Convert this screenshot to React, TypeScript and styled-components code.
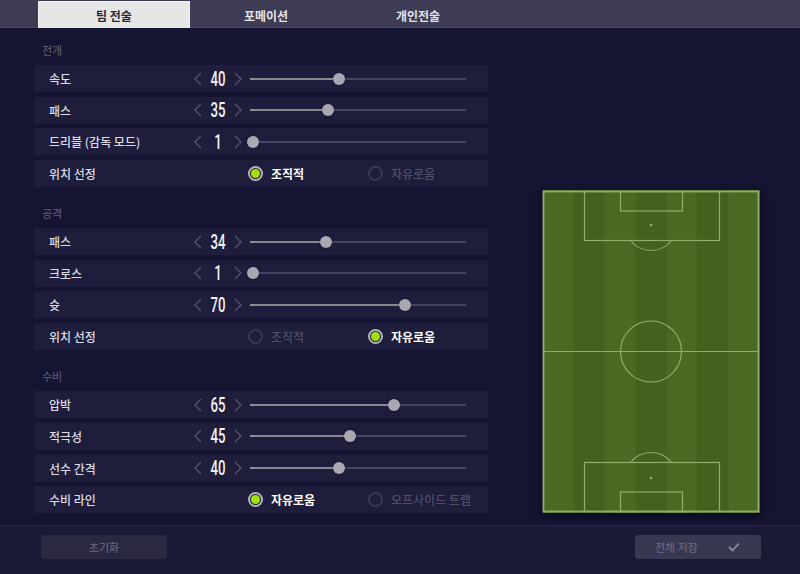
import React from "react";
import styled, { createGlobalStyle } from "styled-components";

const GlobalStyle = createGlobalStyle`
  html, body { margin: 0; padding: 0; background: #151433; }
  body { font-family: "Noto Sans CJK KR", "Noto Sans", sans-serif; }
  * { box-sizing: border-box; }
`;

const Screen = styled.div`
  width: 800px;
  height: 574px;
  display: flex;
  flex-direction: column;
  background: #151433;
  overflow: hidden;
`;

const TabBar = styled.div`
  height: 28px;
  flex: none;
  display: flex;
  padding-left: 38px;
  background: #3e3c55;
  border-bottom: 1px solid #4a4862;
`;

const Tab = styled.div<{ $active?: boolean }>`
  width: 152px;
  height: 27px;
  margin-top: 1px;
  display: flex;
  align-items: center;
  justify-content: center;
  font-size: 12px;
  font-weight: 700;
  color: ${(p) => (p.$active ? "#2a2a2e" : "#e2e2e8")};
  background: ${(p) => (p.$active ? "#e6e6e6" : "transparent")};
  border: ${(p) => (p.$active ? "1px solid #f4f4f4" : "1px solid transparent")};
  border-bottom: none;
`;

const Main = styled.div`
  flex: 1;
  display: flex;
  min-height: 0;
`;

const LeftColumn = styled.div`
  width: 488px;
  padding: 14px 0 0 34px;
  display: flex;
  flex-direction: column;
  gap: 18px;
`;

const Section = styled.div`
  display: flex;
  flex-direction: column;
`;

const SectionTitle = styled.div`
  height: 16px;
  line-height: 16px;
  margin: 0 0 7px 8px;
  font-size: 11px;
  color: #64637c;
`;

const Rows = styled.div`
  display: flex;
  flex-direction: column;
  gap: 4.7px;
`;

const Row = styled.div`
  height: 27px;
  display: flex;
  align-items: center;
  padding-left: 15px;
  background: #1e1d3b;
`;

const Label = styled.div`
  width: 144px;
  font-size: 12px;
  font-weight: 500;
  color: #dcdce4;
  white-space: nowrap;
`;

const Stepper = styled.div`
  width: 57px;
  height: 27px;
  display: flex;
  align-items: center;
`;

const Chevron = styled.svg`
  width: 10px;
  height: 14px;
  flex: none;
`;

const Value = styled.div`
  width: 30px;
  text-align: center;
  font-family: Roboto, "Liberation Sans", sans-serif;
  font-size: 20px;
  font-weight: 500;
  color: #f2f2f6;
  transform: scaleX(0.66);
  line-height: 27px;
  margin-top: 1px;
`;

const SliderBox = styled.div`
  position: relative;
  width: 216px;
  height: 14px;
`;

const Track = styled.div`
  position: absolute;
  left: 0;
  right: 0;
  top: 6px;
  height: 2px;
  background: #46455f;
`;

const Fill = styled.div`
  position: absolute;
  left: 0;
  top: 6px;
  height: 2px;
  background: #8a898f;
`;

const Thumb = styled.div`
  position: absolute;
  top: 1px;
  width: 12px;
  height: 12px;
  margin-left: -6px;
  border-radius: 50%;
  background: #a9a8b2;
  box-shadow: 0 0 2px rgba(0, 0, 0, 0.5);
`;

const Options = styled.div`
  display: flex;
  align-items: center;
  margin-left: 58px;
`;

const Option = styled.div<{ $active?: boolean }>`
  width: 120px;
  display: flex;
  align-items: center;
  gap: 8px;
  font-size: 12px;
  font-weight: ${(p) => (p.$active ? 700 : 500)};
  color: ${(p) => (p.$active ? "#ffffff" : "#4f4e66")};
  white-space: nowrap;
`;

const Radio = styled.div<{ $active?: boolean }>`
  width: 15px;
  height: 15px;
  flex: none;
  border-radius: 50%;
  border: 2px solid ${(p) => (p.$active ? "#b4b4b8" : "#3a3954")};
  display: flex;
  align-items: center;
  justify-content: center;
  &::after {
    content: "";
    display: ${(p) => (p.$active ? "block" : "none")};
    width: 9px;
    height: 9px;
    border-radius: 50%;
    background: #9fe30a;
  }
`;

const RightColumn = styled.div`
  flex: 1;
  display: flex;
  align-items: flex-end;
  padding: 0 0 12px 54px;
`;

const PitchFrame = styled.div`
  width: 218px;
  height: 323px;
  box-shadow: 0 3px 8px rgba(0, 0, 0, 0.55);
`;

const Footer = styled.div`
  height: 49px;
  flex: none;
  display: flex;
  align-items: flex-start;
  justify-content: space-between;
  padding: 9px 39px 0 41px;
  background: #1b1a36;
  border-top: 1px solid #28274a;
`;

const FooterButton = styled.div<{ $primary?: boolean }>`
  width: 126px;
  height: 24px;
  border-radius: 3px;
  display: flex;
  align-items: center;
  justify-content: ${(p) => (p.$primary ? "flex-start" : "center")};
  padding-left: ${(p) => (p.$primary ? "20px" : "0")};
  gap: 30px;
  font-size: 11px;
  color: #6e6d84;
  background: ${(p) => (p.$primary ? "#393853" : "#2a2941")};
`;

type SliderItem = { kind: "slider"; label: string; value: number };
type RadioItem = { kind: "radio"; label: string; options: string[]; selected: number };
type Item = SliderItem | RadioItem;

const sections: { title: string; items: Item[] }[] = [
  {
    title: "전개",
    items: [
      { kind: "slider", label: "속도", value: 40 },
      { kind: "slider", label: "패스", value: 35 },
      { kind: "slider", label: "드리블 (감독 모드)", value: 1 },
      { kind: "radio", label: "위치 선정", options: ["조직적", "자유로움"], selected: 0 },
    ],
  },
  {
    title: "공격",
    items: [
      { kind: "slider", label: "패스", value: 34 },
      { kind: "slider", label: "크로스", value: 1 },
      { kind: "slider", label: "슛", value: 70 },
      { kind: "radio", label: "위치 선정", options: ["조직적", "자유로움"], selected: 1 },
    ],
  },
  {
    title: "수비",
    items: [
      { kind: "slider", label: "압박", value: 65 },
      { kind: "slider", label: "적극성", value: 45 },
      { kind: "slider", label: "선수 간격", value: 40 },
      { kind: "radio", label: "수비 라인", options: ["자유로움", "오프사이드 트랩"], selected: 0 },
    ],
  },
];

const ChevronIcon = ({ dir }: { dir: "left" | "right" }) => (
  <Chevron viewBox="0 0 10 14">
    <polyline
      points={dir === "left" ? "8,1 2,7 8,13" : "2,1 8,7 2,13"}
      fill="none"
      stroke="#55546e"
      strokeWidth="1.3"
    />
  </Chevron>
);

const Slider = ({ value }: { value: number }) => {
  const pos = 1 + 2.2 * value;
  return (
    <SliderBox>
      <Track />
      <Fill style={{ width: `${pos}px` }} />
      <Thumb style={{ left: `${pos}px` }} />
    </SliderBox>
  );
};

const Pitch = () => {
  const W = 218;
  const H = 323;
  const stripeW = (W - 2) / 7;
  const line = "#8fae6c";
  return (
    <svg width={W} height={H} viewBox={`0 0 ${W} ${H}`} style={{ display: "block" }}>
      {Array.from({ length: 7 }).map((_, i) => (
        <rect
          key={i}
          x={1 + i * stripeW}
          y={0}
          width={stripeW + 0.5}
          height={H}
          fill={i % 2 === 0 ? "#4a6a23" : "#43621e"}
        />
      ))}
      <g fill="none" stroke={line} strokeWidth="1.2">
        <rect x={1.5} y={1.5} width={W - 3} height={H - 3} strokeWidth="1.8" />
        <line x1={1.5} y1={H / 2} x2={W - 1.5} y2={H / 2} />
        <circle cx={W / 2} cy={H / 2} r={30.5} />
        <rect x={42.5} y={1.5} width={135} height={49} />
        <rect x={78.5} y={1.5} width={62} height={19.5} />
        <path d={`M ${W / 2 - 20.5} 50.5 A 26 26 0 0 0 ${W / 2 + 20.5} 50.5`} />
        <rect x={42.5} y={H - 50.5} width={135} height={49} />
        <rect x={78.5} y={H - 21} width={62} height={19.5} />
        <path d={`M ${W / 2 - 20.5} ${H - 50.5} A 26 26 0 0 1 ${W / 2 + 20.5} ${H - 50.5}`} />
      </g>
      <circle cx={W / 2} cy={35} r={1.3} fill={line} />
      <circle cx={W / 2} cy={H - 35} r={1.3} fill={line} />
    </svg>
  );
};

const CheckIcon = () => (
  <svg width="12" height="10" viewBox="0 0 12 10">
    <polyline points="1,5 4.5,8.5 11,1.5" fill="none" stroke="#8c8ba2" strokeWidth="1.8" />
  </svg>
);

export default function App() {
  return (
    <Screen>
      <GlobalStyle />
      <TabBar>
        <Tab $active>팀 전술</Tab>
        <Tab>포메이션</Tab>
        <Tab>개인전술</Tab>
      </TabBar>
      <Main>
        <LeftColumn>
          {sections.map((s) => (
            <Section key={s.title}>
              <SectionTitle>{s.title}</SectionTitle>
              <Rows>
                {s.items.map((it, idx) => (
                  <Row key={idx}>
                    <Label>{it.label}</Label>
                    {it.kind === "slider" ? (
                      <>
                        <Stepper>
                          <ChevronIcon dir="left" />
                          <Value>{it.value}</Value>
                          <ChevronIcon dir="right" />
                        </Stepper>
                        <Slider value={it.value} />
                      </>
                    ) : (
                      <Options>
                        {it.options.map((o, oi) => (
                          <Option key={o} $active={oi === it.selected}>
                            <Radio $active={oi === it.selected} />
                            {o}
                          </Option>
                        ))}
                      </Options>
                    )}
                  </Row>
                ))}
              </Rows>
            </Section>
          ))}
        </LeftColumn>
        <RightColumn>
          <PitchFrame>
            <Pitch />
          </PitchFrame>
        </RightColumn>
      </Main>
      <Footer>
        <FooterButton>초기화</FooterButton>
        <FooterButton $primary>
          전체 저장
          <CheckIcon />
        </FooterButton>
      </Footer>
    </Screen>
  );
}
